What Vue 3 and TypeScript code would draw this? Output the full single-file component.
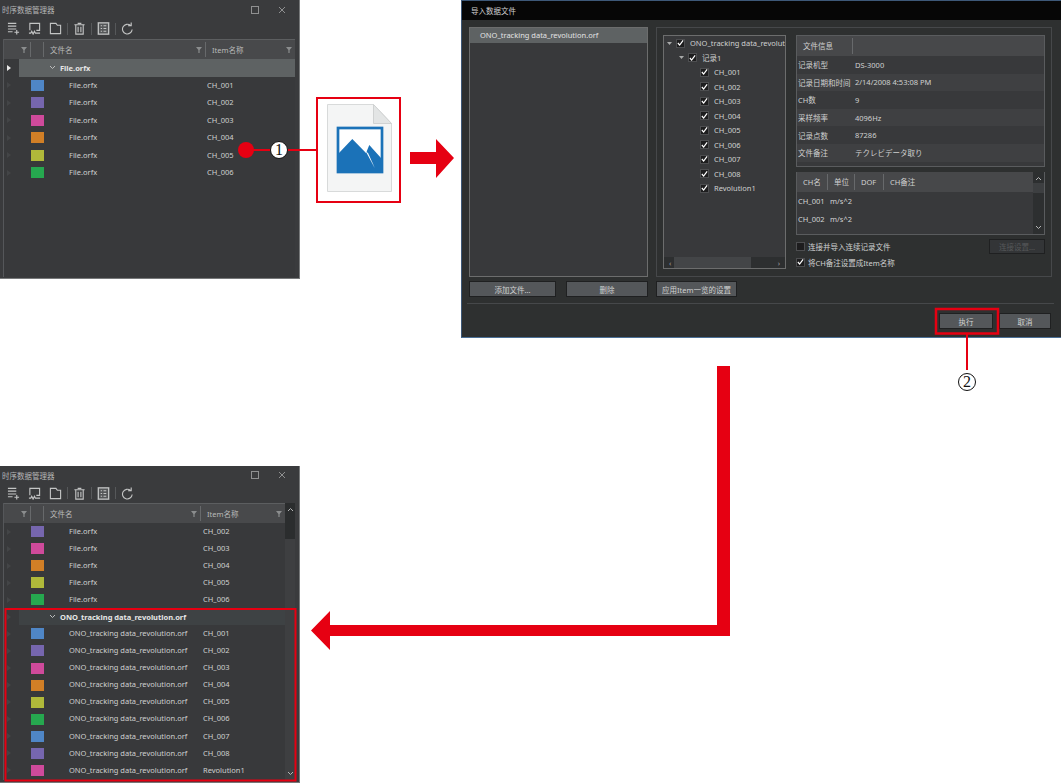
<template>
  <div class="page">
    <!-- 时序数据管理器 -->
    <section v-for="panel in panels" :key="panel.id" class="panel" :class="panel.id">
      <header class="win-title">
        <span>{{ panel.title }}</span>
        <i class="win-max"></i>
        <svg class="win-close" width="8" height="8" viewBox="0 0 8 8"><path d="M1 1l6 6M7 1L1 7" /></svg>
      </header>
      <div class="toolbar">
        <template v-for="(tool, i) in tools" :key="i">
          <i v-if="tool.sep" class="tool-sep"></i>
          <svg class="tool" :class="{ boxed: tool.boxed }" width="13" height="13" viewBox="0 0 14 14"><path :d="tool.d" /></svg>
        </template>
      </div>
      <div class="table">
        <div class="table-main">
          <div class="thead row-grid">
            <div class="th"><svg class="filter" viewBox="0 0 6 6"><path d="M0 0h6L3.600 3v3H2.400V3z" /></svg></div>
            <div class="th"></div>
            <div class="th">文件名<svg class="filter" viewBox="0 0 6 6"><path d="M0 0h6L3.600 3v3H2.400V3z" /></svg></div>
            <div class="th th-item">Item名称<svg class="filter" viewBox="0 0 6 6"><path d="M0 0h6L3.600 3v3H2.400V3z" /></svg></div>
          </div>
          <template v-for="(row, i) in panel.rows" :key="i">
            <div v-if="row.group" class="group-row" :class="{ active: panel.id === 'panel-a' }">
              <span class="marker" :class="{ current: panel.id === 'panel-a' }"></span>
              <div class="group-fill">
                <svg width="7" height="5" viewBox="0 0 7 5"><path d="M1 1l2.500 2.500L6 1" /></svg>
                <b>{{ row.name }}</b>
              </div>
            </div>
            <div v-else class="data-row row-grid">
              <span class="marker"></span>
              <i class="swatch" :style="{ background: row.color }"></i>
              <span class="cell-name">{{ row.name }}</span>
              <span class="cell-item">{{ row.item }}</span>
            </div>
          </template>
        </div>
        <div v-if="panel.id === 'panel-b'" class="vscroll">
          <svg width="7" height="5" viewBox="0 0 7 5"><path d="M1 4l2.500-2.500L6 4" /></svg>
          <i class="vthumb"></i>
          <svg class="down" width="7" height="5" viewBox="0 0 7 5"><path d="M1 1l2.500 2.500L6 1" /></svg>
        </div>
      </div>
    </section>

    <!-- 导入数据文件 -->
    <section class="dialog">
      <header class="dlg-title">导入数据文件</header>
      <div class="dlg-body">
        <div class="file-list"><div class="file-selected">ONO_tracking data_revolution.orf</div></div>
        <div class="dlg-group">
          <div class="tree">
            <div class="tree-items">
              <div v-for="node in treeNodes" :key="node.label" class="tree-node" :style="{ paddingLeft: node.indent + 'px' }">
                <svg v-if="node.open" class="tree-arrow" width="5" height="3" viewBox="0 0 5 3"><path d="M0 0h5L2.500 3z" /></svg>
                <span class="check on">
                  <svg width="8" height="8" viewBox="0 0 8 8"><path d="M1 4l2 2.400L7 1" /></svg>
                </span>
                <span class="tree-label">{{ node.label }}</span>
              </div>
            </div>
            <div class="hscroll">
              <span>‹</span><i class="hthumb"></i><span>›</span>
            </div>
          </div>
          <div class="detail">
            <div class="info">
              <div class="info-head"><span>文件信息</span></div>
              <div v-for="item in fileInfo" :key="item[0]" class="info-row">
                <span>{{ item[0] }}</span><span>{{ item[1] }}</span>
              </div>
            </div>
            <div class="ch-table">
              <div class="ch-main">
                <div class="ch-head">
                  <span>CH名</span><span>单位</span><span>DOF</span><span>CH备注</span>
                </div>
                <div v-for="ch in channels" :key="ch" class="ch-row"><span>{{ ch }}</span><span>m/s^2</span></div>
              </div>
              <div class="ch-scroll">
                <svg width="7" height="5" viewBox="0 0 7 5"><path d="M1 4l2.500-2.500L6 4" /></svg>
                <i></i>
                <svg width="7" height="5" viewBox="0 0 7 5"><path d="M1 1l2.500 2.500L6 1" /></svg>
              </div>
            </div>
            <div class="options">
              <div class="option-lines">
                <label><span class="check"></span>连接并导入连续记录文件</label>
                <label>
                  <span class="check on"><svg width="8" height="8" viewBox="0 0 8 8"><path d="M1 4l2 2.400L7 1" /></svg></span>
                  将CH备注设置成Item名称
                </label>
              </div>
              <button class="btn disabled">连接设置...</button>
            </div>
          </div>
        </div>
        <div class="list-actions">
          <button class="btn btn-add">添加文件...</button>
          <button class="btn btn-del">删除</button>
        </div>
        <div><button class="btn btn-apply">应用Item一览的设置</button></div>
      </div>
      <footer class="dlg-foot">
        <button class="btn btn-run">执行</button>
        <button class="btn btn-cancel">取消</button>
      </footer>
    </section>

    <!-- 图片文件 -->
    <div class="doc-box">
      <svg width="66" height="88" viewBox="0 0 66 88">
        <path d="M.5.5h46l18 19v68H.5z" fill="#f4f5f5" stroke="#d8dada" />
        <path d="M46.500.5v19h18z" fill="#e3e5e5" stroke="#d0d2d2" />
        <rect x="11" y="24" width="44" height="44" fill="#fff" stroke="#1b72b8" stroke-width="2.700" />
        <path d="M12 49l13.300-14L39 49l3.300-8L54 54v14H12z" fill="#1b72b8" />
        <path d="M38 46l10 18.500-6.700-15z" fill="#fff" />
      </svg>
    </div>

    <!-- 标注 -->
    <svg class="marks" width="1062" height="783" viewBox="0 0 1062 783">
      <path d="M246 150h71M967 334v36" fill="none" stroke="#e60012" stroke-width="2" />
      <circle cx="246" cy="150" r="8" fill="#e60012" />
      <path d="M410 152h26v-13l18 19-18 20v-14h-26z" fill="#e60012" />
      <path d="M717 366h13v270H330v14l-19-19.500L330 611v14h387z" fill="#e60012" />
      <rect x="5.500" y="609" width="290" height="171.500" fill="none" stroke="#e60012" stroke-width="2" />
      <rect x="936" y="309" width="62" height="24.500" fill="none" stroke="#e60012" stroke-width="2.500" />
    </svg>
    <span class="num num-1">1</span>
    <span class="num num-2">2</span>
  </div>
</template>

<script setup lang="ts">
interface Row {
  group?: boolean;
  name: string;
  item?: string;
  color?: string;
}

const colors = ["#4f86c6", "#7666ae", "#cf4a9b", "#d17f26", "#b0b93a", "#26a84f"];

// 工具栏图标
const tools = [
  { d: "M1 1.500h9M1 4.500h9M1 7.500h9M1 10.500h5M8 11h5M10.500 8.500v5" },
  { d: "M2 9V1.500h10.500V9H9M1 12h2l1-2 1.500 3L7 10l1 2h5" },
  { d: "M1.500 12.500v-11h6l1.500 2h3.500v9z" },
  { d: "M5 1.500h4M1.500 3h11M3 3v10h8V3M5.500 5v6M8.500 5v6", sep: true },
  { d: "M1.500 1h11v12h-11zM4 4h1.500M7 4h3M4 7h1.500M7 7h3M4 10h1.500M7 10h3", sep: true, boxed: true },
  { d: "M12 8a5.200 5.200 0 1 1-1.700-4.200M11 .5v3.500H7.500", sep: true },
];

const fileRows: Row[] = colors.map((color, i) => ({
  name: "File.orfx",
  item: `CH_00${i + 1}`,
  color,
}));

const orfName = "ONO_tracking data_revolution.orf";
const orfItems = ["CH_001", "CH_002", "CH_003", "CH_004", "CH_005", "CH_006", "CH_007", "CH_008", "Revolution1"];

const panels: { id: string; title: string; rows: Row[] }[] = [
  {
    id: "panel-a",
    title: "时序数据管理器",
    rows: [{ group: true, name: "File.orfx" }, ...fileRows],
  },
  {
    id: "panel-b",
    title: "时序数据管理器",
    rows: [
      ...fileRows.slice(1),
      { group: true, name: orfName },
      ...orfItems.map((item, i) => ({ name: orfName, item, color: colors[i % 6] })),
    ],
  },
];

const treeNodes = [
  { label: "ONO_tracking data_revolution.orf", indent: 2, open: true },
  { label: "记录1", indent: 14, open: true },
  ...orfItems.map((label) => ({ label, indent: 36, open: false })),
];

const fileInfo = [
  ["记录机型", "DS-3000"],
  ["记录日期和时间", "2/14/2008 4:53:08 PM"],
  ["CH数", "9"],
  ["采样频率", "4096Hz"],
  ["记录点数", "87286"],
  ["文件备注", "テクレビデータ取り"],
];

const channels = ["CH_001", "CH_002"];
</script>

<style>
html,
body {
  margin: 0;
  background: #fff;
}
</style>

<style scoped>
.page {
  position: relative;
  width: 1062px;
  height: 783px;
  overflow: hidden;
  background: #fff;
  font-family: "Noto Sans", "Noto Sans CJK SC", sans-serif;
  font-size: 7.500px;
  color: #cfd0d0;
}

/* 管理器窗口 */
.panel {
  position: absolute;
  left: 0;
  width: 300px;
  display: flex;
  flex-direction: column;
  box-sizing: border-box;
  background: #3a3b3d;
  border-right: 1px solid #77797a;
  border-bottom: 1px solid #77797a;
  opacity: 0.999;
}
.panel-a {
  top: 0;
  height: 279px;
}
.panel-b {
  top: 466px;
  height: 317px;
}
.win-title {
  height: 19px;
  flex: none;
  display: flex;
  align-items: center;
  padding: 0 13px 0 2px;
  color: #b5b6b6;
}
.panel-b .win-title {
  height: 18px;
}
.win-title span {
  flex: 1;
}
.win-max {
  width: 6px;
  height: 6px;
  border: 1px solid #8f9091;
  margin-right: 19px;
}
.win-close path {
  fill: none;
  stroke: #8f9091;
}
.toolbar {
  height: 19px;
  flex: none;
  display: flex;
  align-items: center;
  gap: 8px;
  padding-left: 7px;
  box-sizing: border-box;
}
.panel-b .toolbar {
  height: 18px;
}
.tool {
  flex: none;
}
.tool path {
  fill: none;
  stroke: #c4c5c5;
  stroke-width: 1.200;
}
.tool.boxed {
  background: #555759;
}
.tool-sep {
  width: 1px;
  height: 12px;
  margin: 0 -3px;
  background: #56585a;
}
.table {
  margin: 1px 4px 0 3px;
  flex: 1;
  display: flex;
  min-height: 0;
  border-left: 1px solid #55575a;
  background: #38393b;
}
.panel-a .table {
  margin-bottom: 1px;
}
.panel-b .table {
  margin-bottom: 2px;
}
.table-main {
  flex: 1;
  min-width: 0;
}
.row-grid {
  display: grid;
  grid-template-columns: 27px 13px 162px 1fr;
}
.panel-b .row-grid {
  grid-template-columns: 27px 13px 157px 1fr;
}
.thead {
  height: 20px;
  background: #48494b;
  border-top: 1px solid #5c5e60;
  box-sizing: border-box;
}
.th {
  display: flex;
  align-items: center;
  justify-content: flex-end;
  border-right: 1px solid #67696b;
  padding-right: 3px;
  margin: 2px 0;
  box-sizing: border-box;
  color: #b8b9b9;
}
.th:nth-child(3) {
  justify-content: space-between;
  padding-left: 6px;
}
.th-item {
  justify-content: space-between;
  padding-left: 6px;
  border-right: none;
}
.filter {
  width: 6px;
  height: 6px;
  fill: #8b8d8e;
}
.data-row {
  height: 17.500px;
  align-items: center;
  line-height: 1;
}
.panel-b .data-row,
.panel-b .group-row {
  height: 17.070px;
}
.marker {
  width: 0;
  height: 0;
  margin-left: 3px;
  border-left: 4px solid #434547;
  border-top: 3px solid transparent;
  border-bottom: 3px solid transparent;
}
.marker.current {
  border-left-color: #e8e8e8;
}
.swatch {
  display: block;
  width: 13px;
  height: 11px;
}
.cell-name {
  padding-left: 25px;
  white-space: nowrap;
}
.cell-item {
  padding-left: 1px;
}
.panel-b .cell-item {
  padding-left: 2px;
}
.group-row {
  height: 17.500px;
  display: flex;
  align-items: center;
}
.group-fill {
  margin-left: 8px;
  height: 100%;
  flex: 1;
  display: flex;
  align-items: center;
  gap: 4px;
  padding-left: 30px;
  background: #3e4244;
  color: #e6e6e6;
}
.group-row.active .group-fill {
  background: #5e6263;
}
.group-fill path {
  fill: none;
  stroke: #bdbebe;
}
.vscroll {
  position: relative;
  width: 10px;
  flex: none;
  background: #3e3f41;
  display: flex;
  flex-direction: column;
  align-items: center;
}
.vscroll svg {
  position: relative;
  z-index: 1;
  margin: 4px 0;
  flex: none;
}
.vscroll path,
.ch-scroll path {
  fill: none;
  stroke: #b5b6b6;
}
.vthumb {
  position: absolute;
  top: 0;
  left: 0;
  width: 10px;
  height: 36px;
  background: #2b2d2e;
}
.vscroll .down {
  margin-top: auto;
}

/* 导入对话框 */
.dialog {
  position: absolute;
  left: 461px;
  top: 0;
  width: 600px;
  height: 338px;
  box-sizing: border-box;
  background: #2e3030;
  border-left: 1px solid #3d5878;
  border-top: 1px solid #3d5878;
  border-bottom: 1px solid #4a6f96;
  display: flex;
  flex-direction: column;
  opacity: 0.999;
}
.dlg-title {
  height: 19px;
  flex: none;
  background: #060606;
  display: flex;
  align-items: center;
  padding-left: 9px;
}
.dlg-body {
  flex: none;
  display: grid;
  grid-template-columns: 179px 396px;
  grid-template-rows: 250px 16px;
  gap: 4px 8px;
  padding: 7px 0 0 2px;
  height: 284px;
  box-sizing: border-box;
  border-bottom: 1px solid #46484a;
  margin: 0 7px 0 5px;
}
.file-list {
  background: #38393b;
  border: 1px solid #6c6d6d;
  box-sizing: border-box;
}
.file-selected {
  height: 15px;
  line-height: 15px;
  padding-left: 10px;
  background: #5e6263;
  color: #e3e3e3;
}
.dlg-group {
  padding: 7px 6px;
  display: flex;
  gap: 10px;
  border: 1px solid #46484a;
  box-sizing: border-box;
}
.tree {
  width: 123px;
  flex: none;
  border: 1px solid #6c6d6d;
  box-sizing: border-box;
  background: #38393b;
  display: flex;
  flex-direction: column;
  overflow: hidden;
}
.tree-items {
  flex: 1;
}
.tree-node {
  height: 14.500px;
  display: flex;
  align-items: center;
  gap: 5px;
  white-space: nowrap;
}
.tree-arrow {
  fill: #a8a9a9;
  margin: 0 -1px 0 1px;
  flex: none;
}
.tree-label {
  overflow: hidden;
}
.check {
  width: 9px;
  height: 9px;
  box-sizing: border-box;
  flex: none;
  display: inline-flex;
  align-items: center;
  justify-content: center;
  background: #1d1d1e;
  border: 0.500px solid #4d4e50;
}
.check path {
  fill: none;
  stroke: #fff;
  stroke-width: 1.400;
}
.hscroll {
  height: 11px;
  flex: none;
  display: flex;
  align-items: center;
  justify-content: space-between;
  background: #2d2f30;
  color: #aaa;
  padding: 0 5px;
}
.hthumb {
  width: 82px;
  height: 11px;
  background: #434547;
  margin: 0 27px 0 3px;
}
.detail {
  width: 249px;
  flex: none;
}
.info {
  height: 132px;
  background: #38393b;
  border: 1px solid #5a5c5e;
  box-sizing: border-box;
}
.info-head {
  height: 20px;
  display: flex;
  align-items: center;
  background: #47484a;
}
.info-head span {
  width: 56px;
  padding-left: 6px;
  box-sizing: border-box;
  height: 16px;
  line-height: 16px;
  border-right: 1px solid #67696b;
}
.info-row {
  height: 17.600px;
  display: grid;
  grid-template-columns: 57px 1fr;
  align-items: center;
  padding-left: 1px;
  white-space: nowrap;
}
.info-row:nth-child(odd) {
  background: #3f4042;
}
.ch-table {
  height: 63px;
  margin-top: 5px;
  display: flex;
  background: #38393b;
  border: 1px solid #5a5c5e;
  border-top: none;
  box-sizing: border-box;
}
.ch-main {
  flex: 1;
  min-width: 0;
}
.ch-head {
  height: 20px;
  display: flex;
  align-items: center;
  background: #47484a;
}
.ch-head span {
  height: 16px;
  line-height: 16px;
  padding-left: 6px;
  box-sizing: border-box;
  border-right: 1px solid #67696b;
}
.ch-head span:nth-child(1) {
  width: 31px;
}
.ch-head span:nth-child(2) {
  width: 27px;
}
.ch-head span:nth-child(3) {
  width: 29px;
}
.ch-head span:nth-child(4) {
  border-right: none;
}
.ch-row {
  height: 18px;
  display: grid;
  grid-template-columns: 32px 1fr;
  align-items: center;
  padding-left: 1px;
  color: #d3d4d4;
}
.ch-scroll {
  width: 11px;
  flex: none;
  display: flex;
  flex-direction: column;
  align-items: center;
  justify-content: space-between;
  padding: 4px 0;
  box-sizing: border-box;
  background: #2d2f30;
  position: relative;
}
.ch-scroll i {
  position: absolute;
  left: 0;
  top: 11px;
  width: 11px;
  height: 10px;
  background: #3d3f41;
}
.options {
  display: flex;
  justify-content: space-between;
  align-items: flex-start;
  margin-top: 3px;
}
.option-lines label {
  display: flex;
  align-items: center;
  gap: 3px;
  height: 16px;
  white-space: nowrap;
}
.btn {
  display: block;
  padding: 0;
  height: 16px;
  font: inherit;
  color: #d0d1d1;
  background: #54575a;
  border: 1px solid #1f2021;
  box-sizing: border-box;
  white-space: nowrap;
}
.btn.disabled {
  width: 56px;
  height: 15px;
  margin-top: 1px;
  background: #333537;
  color: #56585a;
}
.list-actions {
  display: flex;
  justify-content: space-between;
}
.btn-add {
  width: 87px;
}
.btn-del {
  width: 82px;
}
.btn-apply {
  width: 81px;
}
.dlg-foot {
  flex: 1;
  display: flex;
  gap: 6px;
  padding: 9px 0 0 477px;
  box-sizing: border-box;
}
.btn-run {
  width: 54px;
}
.btn-cancel {
  width: 52px;
}

/* 文件图标与标注 */
.doc-box {
  position: absolute;
  left: 316px;
  top: 97px;
  width: 85px;
  height: 106px;
  box-sizing: border-box;
  border: 2px solid #e60012;
  padding: 5px 0 0 9px;
  background: #fff;
}
.doc-box svg {
  display: block;
}
.marks {
  position: absolute;
  left: 0;
  top: 0;
  pointer-events: none;
}
.num {
  position: absolute;
  width: 18px;
  height: 18px;
  box-sizing: border-box;
  border: 1px solid #111;
  border-radius: 50%;
  background: #fff;
  color: #111;
  font-family: "Liberation Serif", serif;
  font-size: 16px;
  line-height: 16px;
  text-align: center;
}
.num-1 {
  left: 270px;
  top: 141px;
}
.num-2 {
  left: 958px;
  top: 373px;
}
</style>
